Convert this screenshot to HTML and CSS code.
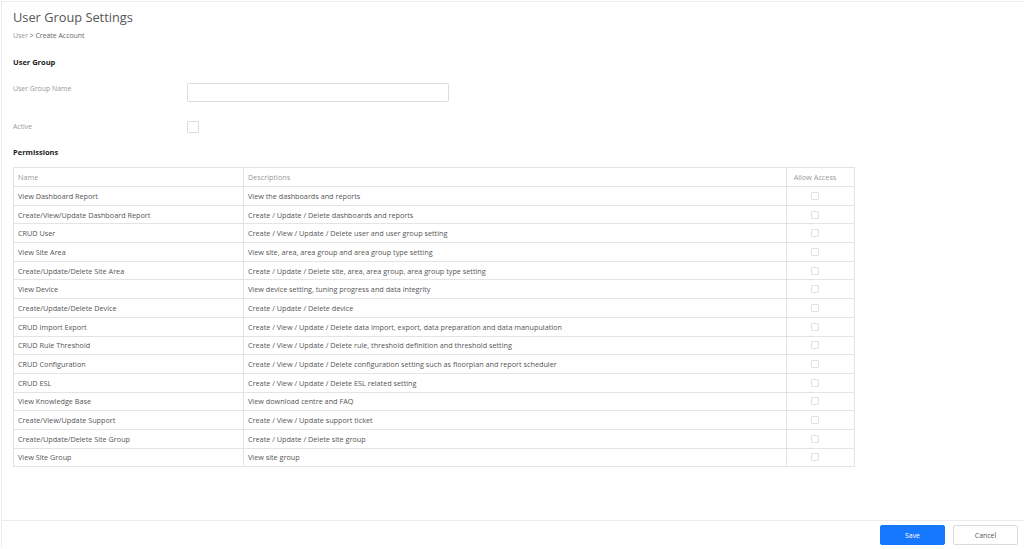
FILE: index.html
```html
<!DOCTYPE html>
<html>
<head>
<meta charset="utf-8">
<link rel="stylesheet" href="styles.css">
</head>
<body>
<div class="page">
  <div class="content">
    <h1 class="title">User Group Settings</h1>
    <div class="crumbs"><span class="crumb-muted">User</span> &gt; Create Account</div>
    <h2 class="section">User Group</h2>
    <div class="form">
      <label class="label">User Group Name</label>
      <div class="input"></div>
      <label class="label label-active">Active</label>
      <div class="check check-lg"></div>
    </div>
    <h2 class="section section-perm">Permissions</h2>
    <table class="perm">
      <colgroup><col class="c-name"><col class="c-desc"><col class="c-allow"></colgroup>
      <thead>
        <tr><th>Name</th><th>Descriptions</th><th class="center">Allow Access</th></tr>
      </thead>
      <tbody>
        <tr><td>View Dashboard Report</td><td>View the dashboards and reports</td><td class="center"><span class="check"></span></td></tr>
        <tr><td>Create/View/Update Dashboard Report</td><td>Create / Update / Delete dashboards and reports</td><td class="center"><span class="check"></span></td></tr>
        <tr><td>CRUD User</td><td>Create / View / Update / Delete user and user group setting</td><td class="center"><span class="check"></span></td></tr>
        <tr><td>View Site Area</td><td>View site, area, area group and area group type setting</td><td class="center"><span class="check"></span></td></tr>
        <tr><td>Create/Update/Delete Site Area</td><td>Create / Update / Delete site, area, area group, area group type setting</td><td class="center"><span class="check"></span></td></tr>
        <tr><td>View Device</td><td>View device setting, tuning progress and data integrity</td><td class="center"><span class="check"></span></td></tr>
        <tr><td>Create/Update/Delete Device</td><td>Create / Update / Delete device</td><td class="center"><span class="check"></span></td></tr>
        <tr><td>CRUD Import Export</td><td>Create / View / Update / Delete data import, export, data preparation and data manupulation</td><td class="center"><span class="check"></span></td></tr>
        <tr><td>CRUD Rule Threshold</td><td>Create / View / Update / Delete rule, threshold definition and threshold setting</td><td class="center"><span class="check"></span></td></tr>
        <tr><td>CRUD Configuration</td><td>Create / View / Update / Delete configuration setting such as floorplan and report scheduler</td><td class="center"><span class="check"></span></td></tr>
        <tr><td>CRUD ESL</td><td>Create / View / Update / Delete ESL related setting</td><td class="center"><span class="check"></span></td></tr>
        <tr><td>View Knowledge Base</td><td>View download centre and FAQ</td><td class="center"><span class="check"></span></td></tr>
        <tr><td>Create/View/Update Support</td><td>Create / View / Update support ticket</td><td class="center"><span class="check"></span></td></tr>
        <tr><td>Create/Update/Delete Site Group</td><td>Create / Update / Delete site group</td><td class="center"><span class="check"></span></td></tr>
        <tr><td>View Site Group</td><td>View site group</td><td class="center"><span class="check"></span></td></tr>
      </tbody>
    </table>
  </div>
  <div class="footer">
    <button class="btn btn-primary">Save</button>
    <button class="btn btn-default">Cancel</button>
  </div>
</div>
</body>
</html>
```
FILE: styles.css
```css
html, body {
  margin: 0;
  padding: 0;
  background: #fff;
}
body {
  font-family: "Open Sans", "Noto Sans", "Liberation Sans", sans-serif;
  color: #555;
}
.page {
  margin: 1px 0 0 1px;
  border-top: 1px solid #ececec;
  border-left: 1px solid #ececec;
  height: 547px;
  display: flex;
  flex-direction: column;
  box-sizing: border-box;
}
.content {
  flex: 1;
  padding: 7px 11px 0 11px;
}
.title {
  margin: 0;
  font-size: 12.8px;
  line-height: 16px;
  font-weight: 400;
  color: #555;
}
.crumbs {
  margin-top: 6px;
  font-size: 6.9px;
  line-height: 10px;
  color: #666;
}
.crumb-muted { color: #999; }
.section {
  margin: 16px 0 0 0;
  font-size: 7.5px;
  line-height: 10px;
  font-weight: 700;
  color: #222;
}
.section-perm { margin-top: 14px; }
.form {
  margin-top: 16px;
  display: grid;
  grid-template-columns: 174px 262px;
  row-gap: 19px;
  align-items: start;
}
.label {
  font-size: 6.9px;
  line-height: 10px;
  padding-top: 1px;
  color: #999;
}
.input {
  height: 19px;
  box-sizing: border-box;
  border: 1px solid #dcdcdc;
  border-radius: 2px;
}
.check {
  display: inline-block;
  width: 8px;
  height: 8px;
  box-sizing: border-box;
  border: 1px solid #e2e2e2;
  border-radius: 1px;
  vertical-align: middle;
}
.check-lg {
  width: 12px;
  height: 12px;
  border-color: #dcdcdc;
}
.perm {
  margin-top: 10px;
  width: 841px;
  border-collapse: collapse;
  table-layout: fixed;
  font-size: 7.25px;
}
.c-name { width: 230px; }
.c-desc { width: 543px; }
.c-allow { width: 68px; }
.perm th, .perm td {
  border: 1px solid #e4e4e4;
  padding: 0 4px;
  text-align: left;
  white-space: nowrap;
  overflow: hidden;
}
.perm th {
  height: 18px;
  font-weight: 400;
  color: #999;
}
.perm td {
  height: 17.7px;
  color: #555;
}
.perm .center {
  text-align: center;
  padding: 0 11px 0 0;
}
.perm td.center { line-height: 0; }
.footer {
  border-top: 1px solid #ececec;
  height: 28px;
  flex: none;
  display: flex;
  justify-content: flex-end;
  align-items: flex-start;
  gap: 8px;
  padding: 4px 6px 0 0;
  box-sizing: border-box;
}
.btn {
  width: 65px;
  height: 20px;
  border-radius: 2px;
  font-family: inherit;
  font-size: 6.9px;
  padding: 0;
  cursor: pointer;
}
.btn-primary {
  background: #1677ff;
  border: 1px solid #1677ff;
  color: #fff;
}
.btn-default {
  background: #fff;
  border: 1px solid #dcdcdc;
  color: #555;
}
```
